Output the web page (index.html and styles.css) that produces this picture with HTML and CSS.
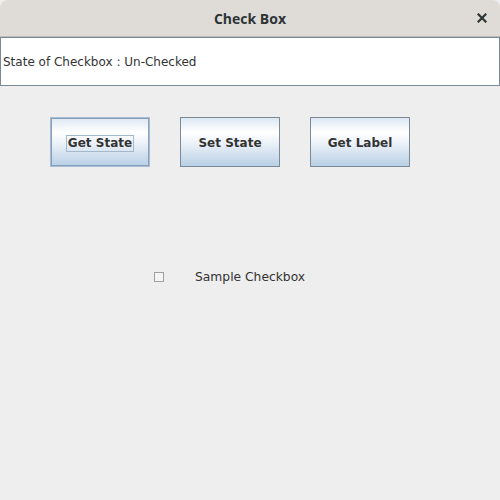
FILE: index.html
```html
<!DOCTYPE html>
<html lang="en">
<head>
    <meta charset="UTF-8">
    <title>Check Box</title>
    <link rel="stylesheet" href="styles.css">
</head>
<body>
    <div class="window">
        <div class="titlebar">
            <span class="title">Check Box</span>
            <svg class="close" width="10" height="10" viewBox="0 0 10 10">
                <path d="M1.5 1.5 L8.5 8.5 M8.5 1.5 L1.5 8.5" stroke="#2e3436" stroke-width="2.2" stroke-linecap="square"/>
            </svg>
        </div>
        <div class="status">State of Checkbox : Un-Checked</div>
        <div class="buttons">
            <button type="button" class="btn focused"><span class="focus-rect">Get State</span></button>
            <button type="button" class="btn">Set State</button>
            <button type="button" class="btn">Get Label</button>
        </div>
        <label class="check-row">
            <span class="box"></span>
            <span class="check-label">Sample Checkbox</span>
        </label>
    </div>
</body>
</html>
```

FILE: styles.css
```css
body {
    margin: 0;
    padding: 0;
    background-color: #eeeeee;
    font-family: "DejaVu Sans", sans-serif;
}
.window {
    width: 500px;
    height: 500px;
    background-color: #eeeeee;
}
.titlebar {
    position: relative;
    height: 36px;
    background-color: #dfdbd6;
    border-bottom: 1px solid #bfb9b3;
    border-radius: 8px 8px 0 0;
    display: flex;
    align-items: center;
    justify-content: center;
}
.title {
    font-family: "Open Sans", sans-serif;
    font-weight: bold;
    font-size: 14px;
    color: #2e3436;
}
.close {
    position: absolute;
    right: 13px;
    top: 13px;
}
.status {
    height: 47px;
    border: 1px solid #7a8a99;
    background-color: white;
    padding-left: 2px;
    display: flex;
    align-items: center;
    font-size: 12px;
    color: #333333;
}
.buttons {
    display: flex;
    gap: 30px;
    padding-left: 50px;
    margin-top: 31px;
}
.btn {
    width: 100px;
    height: 50px;
    border: 1px solid #7a8a99;
    background: linear-gradient(to bottom, #dde8f3 0%, #ffffff 30%, #e9f0f7 55%, #b8cfe5 100%);
    font-family: "DejaVu Sans", sans-serif;
    font-weight: bold;
    font-size: 12px;
    color: #333333;
    padding: 2px 0 0;
    display: flex;
    align-items: center;
    justify-content: center;
}
.btn.focused {
    border-color: #a3bdd8;
    box-shadow: inset 0 0 0 1px #8a9fb5;
}
.focus-rect {
    border: 1px solid #a3b8cc;
    padding: 0 1px;
    line-height: 15px;
}
.check-row {
    display: flex;
    align-items: center;
    height: 20px;
    margin-top: 100px;
    padding-left: 154px;
}
.box {
    width: 8px;
    height: 8px;
    border: 1px solid #a0a0a0;
    background-color: #f4f4f4;
}
.check-label {
    margin-left: 31px;
    font-size: 12.3px;
    color: #333333;
}
```
